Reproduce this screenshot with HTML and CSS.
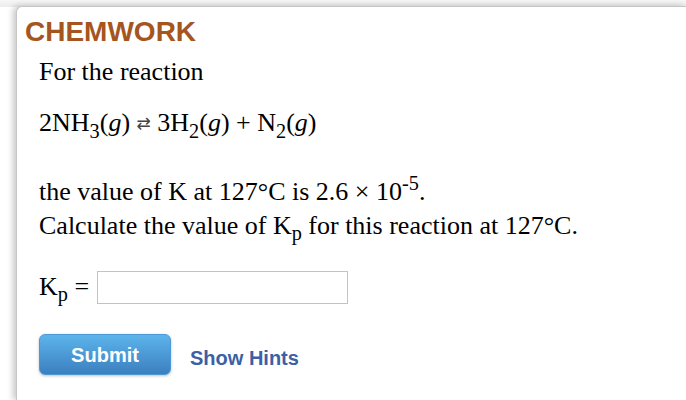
FILE: index.html
```html
<!DOCTYPE html>
<html lang="en">
<head>
    <meta charset="UTF-8">
    <title>CHEMWORK</title>
    <link rel="stylesheet" href="styles.css">
</head>
<body>
    <div class="card">
        <div class="brand">CHEMWORK</div>

        <div class="problem">
            <p>For the reaction</p>
            <p class="equation">2NH<sub>3</sub>(<i>g</i>) <span class="arrows">&#8644;</span> 3H<sub>2</sub>(<i>g</i>) + N<sub>2</sub>(<i>g</i>)</p>
            <p class="given">the value of K at 127°C is 2.6 × 10<sup>-5</sup>.<br>Calculate the value of K<sub>p</sub> for this reaction at 127°C.</p>

            <div class="answer">
                <label for="kp">K<sub>p</sub> =</label>
                <input id="kp" class="answer-input" type="text">
            </div>

            <div class="actions">
                <button class="submit-btn">Submit</button>
                <a href="#" class="hints-link">Show Hints</a>
            </div>
        </div>
    </div>
</body>
</html>
```

FILE: styles.css
```css
* {
    margin: 0;
    padding: 0;
    box-sizing: border-box;
}

html,
body {
    height: 100%;
    overflow: hidden;
}

body {
    background: #ffffff linear-gradient(#f6f6f6, #ececec) no-repeat;
    background-size: 100% 7px;
    padding: 6px 0 0 16px;
}

.card {
    height: 100%;
    background: white;
    border: 1px solid #c6c6c6;
    border-right: none;
    border-bottom: none;
    border-radius: 6px 0 0 0;
    box-shadow: -3px 0 6px rgba(0, 0, 0, 0.22);
}

.brand {
    padding: 10px 0 0 8px;
    font-family: "Liberation Sans", Arial, sans-serif;
    font-size: 28px;
    line-height: 30px;
    font-weight: bold;
    color: #a5561f;
}

.problem {
    padding-left: 22px;
    margin-top: 8px;
    font-family: "Liberation Serif", "Times New Roman", serif;
    font-size: 26px;
    line-height: 34px;
    color: #000;
}

.problem sub,
.problem sup {
    font-size: 0.78em;
    line-height: 0;
}

.problem sub {
    vertical-align: -0.32em;
}

.problem sup {
    vertical-align: 0.5em;
}

.equation {
    margin-top: 17px;
}

.arrows {
    font-family: "DejaVu Sans", sans-serif;
    font-size: 17px;
    color: #444;
    vertical-align: 0.12em;
}

.given {
    margin-top: 35px;
}

.answer {
    display: flex;
    align-items: center;
    gap: 8px;
    margin-top: 27px;
}

.answer-input {
    width: 251px;
    height: 33px;
    border: 1px solid #c3c3c3;
    font-size: 18px;
    padding: 0 6px;
}

.actions {
    display: flex;
    align-items: center;
    gap: 19px;
    margin-top: 30px;
    font-family: "Liberation Sans", Arial, sans-serif;
    font-size: 20px;
    font-weight: bold;
}

.submit-btn {
    width: 132px;
    height: 41px;
    border: 1px solid #4d98d6;
    border-radius: 6px;
    background: linear-gradient(#5db4eb, #3b7fbf);
    color: white;
    font: inherit;
    cursor: pointer;
    box-shadow: 0 1px 3px rgba(0, 0, 0, 0.25);
}

.hints-link {
    color: #3c5fa6;
    text-decoration: none;
    margin-top: 6px;
}
```
